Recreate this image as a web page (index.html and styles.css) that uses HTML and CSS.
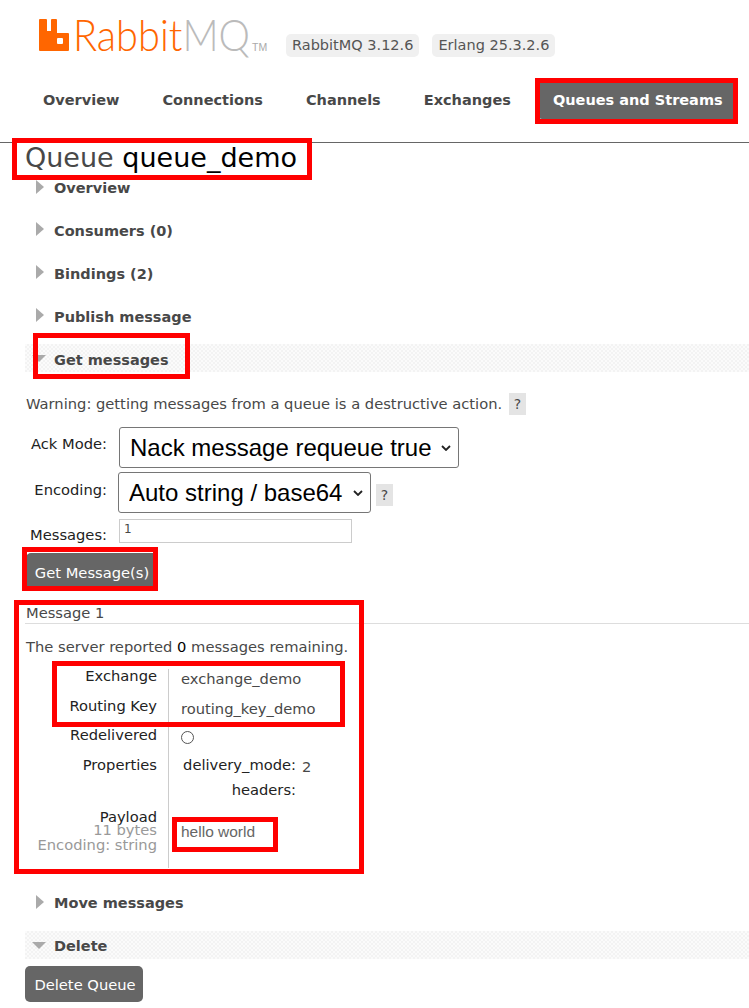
FILE: index.html
```html
<!DOCTYPE html>
<html lang="en">
<head>
<meta charset="utf-8">
<title>RabbitMQ Management</title>
<link rel="stylesheet" href="styles.css">
</head>
<body>
<div class="page">
  <header class="header">
    <div class="brand">
      <svg class="logo-mark" width="30" height="32" viewBox="0 0 30 32"><path fill="#f60" fill-rule="evenodd" d="M1 0h6a1 1 0 0 1 1 1v11h4V1a1 1 0 0 1 1-1h4a1 1 0 0 1 1 1v13h11a1 1 0 0 1 1 1v16a1 1 0 0 1-1 1H1a1 1 0 0 1-1-1V1a1 1 0 0 1 1-1zM19 19a1 1 0 0 0-1 1v4a1 1 0 0 0 1 1h4a1 1 0 0 0 1-1v-4a1 1 0 0 0-1-1z"/></svg>
      <div class="logo-words">
        <span class="logo-text"><span class="logo-rabbit">Rabbit</span><span class="logo-mq">MQ</span></span>
        <span class="logo-tm">TM</span>
      </div>
      <span class="pill">RabbitMQ 3.12.6</span>
      <span class="pill">Erlang 25.3.2.6</span>
    </div>
    <nav class="nav">
      <a class="tab">Overview</a>
      <a class="tab">Connections</a>
      <a class="tab">Channels</a>
      <a class="tab">Exchanges</a>
      <a class="tab tab-active">Queues and Streams</a>
    </nav>
  </header>

  <h1 class="title">Queue <b>queue_demo</b></h1>

  <h2 class="section s-first"><i class="arrow-right"></i>Overview</h2>
  <h2 class="section"><i class="arrow-right"></i>Consumers (0)</h2>
  <h2 class="section"><i class="arrow-right"></i>Bindings (2)</h2>
  <h2 class="section"><i class="arrow-right"></i>Publish message</h2>
  <h2 class="section open"><i class="arrow-down"></i>Get messages</h2>

  <div class="get-body">
    <p class="warning">Warning: getting messages from a queue is a destructive action. <span class="help">?</span></p>
    <div class="row row-ack">
      <label class="row-label">Ack Mode:</label>
      <select class="big-select ack"><option>Nack message requeue true</option></select>
    </div>
    <div class="row row-enc">
      <label class="row-label">Encoding:</label>
      <select class="big-select enc"><option>Auto string / base64</option></select>
      <span class="help help-enc">?</span>
    </div>
    <div class="row row-msg">
      <label class="row-label">Messages:</label>
      <input class="num" type="text" value="1">
    </div>
    <button class="btn btn-get">Get Message(s)</button>
  </div>

  <h3 class="msg-title">Message 1</h3>
  <p class="remaining">The server reported <span class="zero">0</span> messages remaining.</p>

  <div class="facts">
    <div class="fact f-ex"><div class="k">Exchange</div><div class="v">exchange_demo</div></div>
    <div class="fact f-rk"><div class="k">Routing Key</div><div class="v">routing_key_demo</div></div>
    <div class="fact f-re"><div class="k">Redelivered</div><div class="v"><i class="radio"></i></div></div>
    <div class="fact f-pr"><div class="k">Properties</div><div class="v props">
      <div class="prop"><span class="pk">delivery_mode:</span><span class="pv">2</span></div>
      <div class="prop prop2"><span class="pk">headers:</span></div>
    </div></div>
    <div class="fact f-pa"><div class="k">Payload<small>11 bytes</small><small>Encoding: string</small></div><div class="v payload">hello world</div></div>
  </div>

  <h2 class="section s-move"><i class="arrow-right"></i>Move messages</h2>
  <h2 class="section open s-del"><i class="arrow-down"></i>Delete</h2>
  <button class="btn btn-del">Delete Queue</button>

  <div class="mark m-title"></div>
  <div class="mark m-tab"></div>
  <div class="mark m-get"></div>
  <div class="mark m-btn"></div>
  <div class="mark m-msg"></div>
  <div class="mark m-ex"></div>
  <div class="mark m-hello"></div>
</div>
</body>
</html>
```
FILE: styles.css
```css
html, body { margin: 0; padding: 0; background: #fff; }
.page { position: relative; width: 749px; height: 1008px; overflow: hidden; font-family: "DejaVu Sans", Verdana, sans-serif; font-size: 14.700px; color: #484848; }

.header { height: 142px; border-bottom: 1px solid #666; }
.brand { display: flex; align-items: flex-start; padding: 19px 0 0 39px; height: 50px; }
.logo-mark { flex: none; }
.logo-words { display: flex; align-items: flex-start; width: 217px; flex: none; }
.logo-text { display: block; width: 177px; flex: none; font-family: Lato, sans-serif; font-weight: 300; font-size: 43px; line-height: 32px; margin-left: 4px; white-space: nowrap; transform: scaleX(.925); transform-origin: left center; }
.logo-rabbit { color: #f60; }
.logo-mq { color: #bbb; }
.logo-tm { font-family: "Liberation Sans", sans-serif; font-size: 10.500px; color: #aaa; margin: 24px 0 0 2px; line-height: 8px; }
.pill { background: #f0f0f0; border-radius: 5px; padding: 0 6px; height: 23px; line-height: 23px; margin-top: 15px; margin-right: 13px; font-size: 14.500px; color: #555; white-space: nowrap; }

.nav { display: flex; align-items: center; margin: 13px 0 0 25px; }
.tab { padding: 0 18px; height: 37px; line-height: 37px; margin-right: 7px; font-weight: 700; font-size: 14.500px; color: #484848; white-space: nowrap; }
.tab-active { background: #666; color: #fff; border-radius: 3px; padding: 0 14px; margin-left: 3px; }

.title { margin: 0; padding-left: 25px; height: 31px; line-height: 29px; font-size: 27px; font-weight: 400; color: #484848; white-space: nowrap; }
.title b { font-weight: 400; color: #000; }

.section { margin: 14px 0 0 25px; height: 29px; line-height: 31px; font-size: 14.500px; font-weight: 700; color: #484848; padding-left: 29px; position: relative; }
.s-first { margin-top: 0; height: 28px; line-height: 29px; }
.open { margin-top: 13px; height: 28px; line-height: 33px; background: conic-gradient(#f3f3f3 25%, #fbfbfb 0 50%, #f3f3f3 0 75%, #fbfbfb 0) 0 0 / 4px 4px; }
.arrow-right { position: absolute; left: 11px; top: 6px; border-left: 8px solid #aaa; border-top: 7px solid transparent; border-bottom: 7px solid transparent; }
.arrow-down { position: absolute; left: 7px; top: 11px; border-top: 7px solid #aaa; border-left: 7px solid transparent; border-right: 7px solid transparent; }

.get-body { padding-left: 25px; }
.warning { margin: 0; padding: 21px 0 0 1px; height: 36px; box-sizing: border-box; line-height: 21px; white-space: nowrap; }
.help { display: inline-block; background: #e4e4e4; width: 17px; height: 22px; line-height: 22px; text-align: center; margin-left: 2px; font-size: 14px; }
.row { display: flex; align-items: flex-start; }
.row-label { width: 82px; text-align: right; color: #222; flex: none; }
.row-ack { margin-top: 19px; height: 45px; }
.row-ack .row-label { padding-top: 8px; }
.row-enc { height: 47px; }
.row-enc .row-label { padding-top: 9px; }
.row-msg { height: 34px; }
.row-msg .row-label { padding-top: 7px; }
.big-select { appearance: none; margin: 0 0 0 11px; height: 41px; font-family: "Liberation Sans", Arial, sans-serif; font-size: 24px; color: #000; border: 1px solid #767676; border-radius: 3px; padding: 0 6px 0 10px; background: #fff url("data:image/svg+xml,%3Csvg xmlns='http://www.w3.org/2000/svg' width='10' height='6' viewBox='0 0 10 6'%3E%3Cpath d='M1 1l4 4 4-4' fill='none' stroke='%23222' stroke-width='1.800'/%3E%3C/svg%3E") no-repeat right 7px center; }
.ack { width: 340px; margin-left: 12px; }
.enc { width: 253px; }
.help-enc { margin: 12px 0 0 5px; }
.num { margin: 0 0 0 12px; width: 233px; height: 24px; box-sizing: border-box; border: 1px solid #ccc; padding: 0 4px 4px; font-family: "DejaVu Sans", sans-serif; font-size: 12px; color: #484848; }
.btn { display: block; background: #666; color: #fff; border: 0; border-radius: 5px; font-family: "DejaVu Sans", sans-serif; font-size: 14.700px; cursor: pointer; padding: 0; }
.btn-get { width: 132px; height: 37px; margin-left: 1px; padding-top: 2px; }

.msg-title { margin: 13px 0 0 25px; padding-left: 1px; height: 20px; border-bottom: 1px solid #ddd; font-size: 14.700px; font-weight: 400; line-height: 20px; }
.remaining { margin: 13px 0 0 26px; line-height: 20px; height: 20px; white-space: nowrap; }
.zero { color: #000; }

.facts { margin: 12px 0 0 25px; width: 341px; }
.fact { display: flex; }
.k { width: 143px; flex: none; text-align: right; color: #222; line-height: 15px; padding-right: 11px; box-sizing: border-box; white-space: nowrap; }
.v { border-left: 1px solid #ccc; padding-left: 12px; flex: 1; line-height: 20px; white-space: nowrap; }
.f-ex { height: 29px; }
.f-ex .k { line-height: 13px; }
.f-rk { height: 29px; }
.f-rk .v { padding-top: 1px; }
.f-re { height: 30px; }
.f-pr { height: 54px; }
.f-pa { height: 57px; }
.f-pa .k { line-height: 11px; }
.k small { display: block; color: #999; font-size: 14.700px; line-height: 14.500px; }
.k small:first-of-type { margin-top: 1px; }
.radio { display: block; width: 11px; height: 11px; border: 1px solid #555; border-radius: 50%; margin: 4px 0 0 0; }
.props { padding-left: 0; }
.prop { display: flex; }
.pk { width: 127px; text-align: right; color: #222; line-height: 15px; }
.pv { margin-left: 6px; line-height: 20px; }
.prop2 { margin-top: 5px; }
.payload { font-family: "Liberation Sans", sans-serif; font-size: 15.500px; padding-top: 11px; color: #666; }

.s-move { margin-top: 21px; line-height: 29px; }
.s-del { line-height: 30px; }
.btn-del { margin: 7px 0 0 25px; width: 118px; height: 36px; padding-left: 2px; }

.mark { position: absolute; border: 5px solid #f00; box-sizing: border-box; pointer-events: none; }
.m-title { left: 12px; top: 138px; width: 300px; height: 42px; }
.m-tab { left: 535px; top: 78px; width: 203px; height: 46px; }
.m-get { left: 33px; top: 333px; width: 157px; height: 46px; }
.m-btn { left: 22px; top: 547px; width: 136px; height: 44px; }
.m-msg { left: 14px; top: 600px; width: 350px; height: 274px; }
.m-ex { left: 52px; top: 661px; width: 293px; height: 66px; }
.m-hello { left: 172px; top: 817px; width: 106px; height: 35px; }
```
